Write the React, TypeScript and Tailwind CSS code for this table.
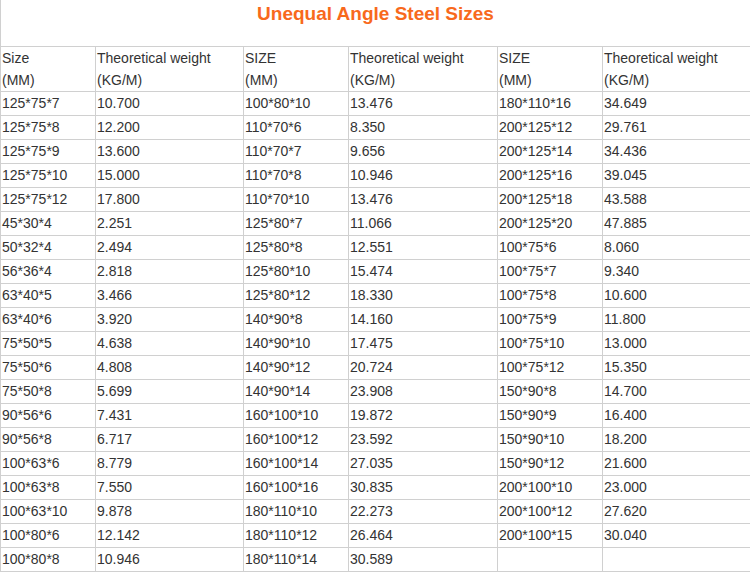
const rows: string[][] = [
  ["125*75*7", "10.700", "100*80*10", "13.476", "180*110*16", "34.649"],
  ["125*75*8", "12.200", "110*70*6", "8.350", "200*125*12", "29.761"],
  ["125*75*9", "13.600", "110*70*7", "9.656", "200*125*14", "34.436"],
  ["125*75*10", "15.000", "110*70*8", "10.946", "200*125*16", "39.045"],
  ["125*75*12", "17.800", "110*70*10", "13.476", "200*125*18", "43.588"],
  ["45*30*4", "2.251", "125*80*7", "11.066", "200*125*20", "47.885"],
  ["50*32*4", "2.494", "125*80*8", "12.551", "100*75*6", "8.060"],
  ["56*36*4", "2.818", "125*80*10", "15.474", "100*75*7", "9.340"],
  ["63*40*5", "3.466", "125*80*12", "18.330", "100*75*8", "10.600"],
  ["63*40*6", "3.920", "140*90*8", "14.160", "100*75*9", "11.800"],
  ["75*50*5", "4.638", "140*90*10", "17.475", "100*75*10", "13.000"],
  ["75*50*6", "4.808", "140*90*12", "20.724", "100*75*12", "15.350"],
  ["75*50*8", "5.699", "140*90*14", "23.908", "150*90*8", "14.700"],
  ["90*56*6", "7.431", "160*100*10", "19.872", "150*90*9", "16.400"],
  ["90*56*8", "6.717", "160*100*12", "23.592", "150*90*10", "18.200"],
  ["100*63*6", "8.779", "160*100*14", "27.035", "150*90*12", "21.600"],
  ["100*63*8", "7.550", "160*100*16", "30.835", "200*100*10", "23.000"],
  ["100*63*10", "9.878", "180*110*10", "22.273", "200*100*12", "27.620"],
  ["100*80*6", "12.142", "180*110*12", "26.464", "200*100*15", "30.040"],
  ["100*80*8", "10.946", "180*110*14", "30.589", "", ""],
];

const headers: [string, string][] = [
  ["Size", "(MM)"],
  ["Theoretical weight", "(KG/M)"],
  ["SIZE", "(MM)"],
  ["Theoretical weight", "(KG/M)"],
  ["SIZE", "(MM)"],
  ["Theoretical weight", "(KG/M)"],
];

const cell = "border-l border-b border-[#d0d0d0] pl-[1px]";

export default function App() {
  return (
    <div className="w-[753px] h-[573px] bg-white overflow-hidden font-['Liberation_Sans',Arial,sans-serif] text-[14px] text-[#333]">
      <div className="w-[750px]">
        <div className="h-[47px] border-l border-b border-[#d0d0d0] pt-[2px] text-center text-[19px] leading-[24px] font-bold text-[#f8691c]">
          Unequal Angle Steel Sizes
        </div>
        <div className="grid grid-cols-[95px_148px_105px_149px_105px_148px]">
          {headers.map(([a, b], i) => (
            <div key={i} className={`${cell} h-[45px] leading-[22px]`}>
              <div>{a}</div>
              <div>{b}</div>
            </div>
          ))}
          {rows.map((r, ri) =>
            r.map((v, ci) => (
              <div key={`${ri}-${ci}`} className={`${cell} h-[24px] leading-[23px]`}>
                {v}
              </div>
            ))
          )}
        </div>
      </div>
    </div>
  );
}
